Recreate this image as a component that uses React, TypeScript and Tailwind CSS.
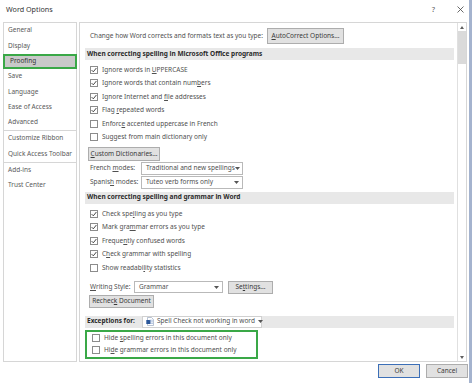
import React from "react";

const font = { fontFamily: '"Noto Sans", "Open Sans", sans-serif' };

// "&" marks the access key letter, which gets underlined
function Label({ text }: { text: string }) {
  const i = text.indexOf("&");
  if (i < 0) return <span>{text}</span>;
  return (
    <span>
      {text.slice(0, i)}
      <u>{text[i + 1]}</u>
      {text.slice(i + 2)}
    </span>
  );
}

function Check({ checked, label }: { checked?: boolean; label: string }) {
  return (
    <div className="flex items-center h-[13.5px] pl-[5px] gap-[4px] text-[#505050]">
      <span className="w-[8px] h-[8px] border border-[#8c8c8c] bg-white flex items-center justify-center shrink-0">
        {checked && (
          <svg width="6" height="6" viewBox="0 0 6 6">
            <path d="M0.6 3.1 L2.3 4.8 L5.4 1" fill="none" stroke="#333" strokeWidth="0.9" />
          </svg>
        )}
      </span>
      <Label text={label} />
    </div>
  );
}

function Caret() {
  return (
    <svg width="5" height="3" viewBox="0 0 5 3" className="shrink-0">
      <path d="M0 0 H5 L2.5 3 Z" fill="#555" />
    </svg>
  );
}

function Select({ value, className }: { value: string; className: string }) {
  return (
    <div
      className={`flex items-center justify-between border border-[#b9b9b9] bg-white pl-[4px] pr-[3px] text-[#505050] ${className}`}
    >
      <span>{value}</span>
      <Caret />
    </div>
  );
}

function Btn({ label, className }: { label: string; className: string }) {
  return (
    <div
      className={`flex items-center justify-center border border-[#adadad] bg-[#e1e1e1] text-[#3a3a3a] ${className}`}
    >
      <Label text={label} />
    </div>
  );
}

function Band({ children }: { children: React.ReactNode }) {
  return (
    <div className="h-[12px] bg-[#e8e8e8] flex items-center pl-[2px] font-bold text-[#2b2b2b]">
      {children}
    </div>
  );
}

const navGroups = [
  ["General", "Display", "Proofing", "Save", "Language", "Ease of Access", "Advanced"],
  ["Customize Ribbon", "Quick Access Toolbar"],
  ["Add-ins", "Trust Center"],
];

export default function App() {
  return (
    <div
      className="w-[474px] h-[383px] bg-white flex text-[6.5px] leading-none whitespace-nowrap overflow-hidden"
      style={font}
    >
      <div className="w-[469px] flex flex-col">
        {/* Title bar */}
        <div className="h-[22px] flex items-start justify-between pt-[6px] pl-[6px] pr-[5px]">
          <span className="text-[7.2px] text-[#333]">Word Options</span>
          <div className="flex items-center gap-[22px] text-[#555]">
            <span className="text-[7.5px]">?</span>
            <svg width="7" height="7" viewBox="0 0 7 7">
              <path d="M0.5 0.5 L6.5 6.5 M6.5 0.5 L0.5 6.5" stroke="#444" strokeWidth="0.8" />
            </svg>
          </div>
        </div>

        {/* Body */}
        <div className="h-[340px] flex pl-[3px] pr-[2px] gap-[2px]">
          {/* Left nav */}
          <div className="w-[74px] border border-[#d6d6d6] flex flex-col text-[#5a5a5a]">
            {navGroups.map((group, gi) => (
              <div key={gi} className={gi > 0 ? "border-t border-[#d6d6d6]" : ""}>
                {group.map((item) =>
                  item === "Proofing" ? (
                    <div
                      key={item}
                      className="h-[15.3px] -mx-[1px] flex items-center pl-[5px] bg-[#c9c9c9] border-2 border-[#3aa847] text-[#333]"
                    >
                      {item}
                    </div>
                  ) : (
                    <div key={item} className="h-[15.3px] flex items-center pl-[4px]">
                      {item}
                    </div>
                  )
                )}
              </div>
            ))}
          </div>

          {/* Right panel */}
          <div className="flex-1 border border-[#d6d6d6] flex">
            <div className="flex-1 flex flex-col pl-[5px] pr-[3px]">
              <div className="mt-[5px] h-[16px] flex items-center pl-[5px] gap-[4px] text-[#505050]">
                <span>Change how Word corrects and formats text as you type:</span>
                <Btn label="&AutoCorrect Options..." className="w-[77px] h-[16px]" />
              </div>

              <div className="mt-[4px]">
                <Band>When correcting spelling in Microsoft Office programs</Band>
              </div>
              <div className="mt-[3px]">
                <Check checked label="Ignore words in &UPPERCASE" />
                <Check checked label="Ignore words that contain num&bers" />
                <Check checked label="Ignore Internet and &file addresses" />
                <Check checked label="Flag &repeated words" />
                <Check label="Enforc&e accented uppercase in French" />
                <Check label="Suggest from main dictionary only" />
              </div>
              <div className="mt-[3px] pl-[3px]">
                <Btn label="&Custom Dictionaries..." className="w-[72px] h-[14px]" />
              </div>
              <div className="flex items-center h-[14px] pl-[5px] mt-[0.5px] text-[#505050]">
                <span className="w-[51px]">
                  <Label text="French &modes:" />
                </span>
                <Select value="Traditional and new spellings" className="w-[102px] h-[13px]" />
              </div>
              <div className="flex items-center h-[14px] pl-[5px] text-[#505050]">
                <span className="w-[51px]">
                  <Label text="Spanis&h modes:" />
                </span>
                <Select value="Tuteo verb forms only" className="w-[102px] h-[13px]" />
              </div>

              <div className="mt-[2px]">
                <Band>When correcting spelling and grammar in Word</Band>
              </div>
              <div className="mt-[3.5px]">
                <Check checked label="Check spe&lling as you type" />
                <Check checked label="Mark gra&mmar errors as you type" />
                <Check checked label="Freque&ntly confused words" />
                <Check checked label="C&heck grammar with spelling" />
                <Check label="Show readabi&lity statistics" />
              </div>
              <div className="mt-[6px] flex items-center h-[13px] pl-[5px] text-[#505050]">
                <span className="w-[44px]">
                  <Label text="&Writing Style:" />
                </span>
                <Select value="Grammar" className="w-[89px] h-[12px]" />
                <Btn label="Se&ttings..." className="ml-[5px] w-[45px] h-[13px]" />
              </div>
              <div className="mt-[1px] pl-[4px]">
                <Btn label="Rechec&k Document" className="w-[65px] h-[13px]" />
              </div>

              <div className="mt-[8px] h-[12px] bg-[#e8e8e8] flex items-center pl-[2px]">
                <span className="w-[55px] font-bold text-[#2b2b2b]">Exceptions for:</span>
                <div className="w-[120px] h-[12px] bg-white border border-[#d0d0d0] flex items-center pl-[3px] pr-[3px] gap-[3px] text-[#505050]">
                  <svg width="8" height="9" viewBox="0 0 8 9" className="shrink-0">
                    <path d="M1.5 0.5 H5.5 L7.5 2.5 V8.5 H1.5 Z" fill="#fff" stroke="#8a9bb5" strokeWidth="0.6" />
                    <rect x="0.3" y="3" width="4.2" height="4" fill="#2b579a" />
                    <path d="M3.5 3.2 H7 M4.6 4.8 H7 M4.6 6.4 H7" stroke="#7f9ccc" strokeWidth="0.6" />
                  </svg>
                  <span className="flex-1">Spell Check not working in word</span>
                  <Caret />
                </div>
              </div>
              <div className="mt-[2px] w-[173px] h-[29px] border-2 border-[#3aa847] flex flex-col justify-center">
                <Check label="Hide &spelling errors in this document only" />
                <Check label="Hi&de grammar errors in this document only" />
              </div>
            </div>

            {/* Scrollbar */}
            <div className="w-[9px] border-l border-[#e0e0e0] flex flex-col">
              <div className="h-[8px] flex items-center justify-center">
                <svg width="4" height="3" viewBox="0 0 4 3">
                  <path d="M0 3 H4 L2 0 Z" fill="#606060" />
                </svg>
              </div>
              <div className="h-[33px] bg-[#dadada]" />
              <div className="flex-1" />
              <div className="h-[8px] flex items-center justify-center">
                <svg width="4" height="3" viewBox="0 0 4 3">
                  <path d="M0 0 H4 L2 3 Z" fill="#606060" />
                </svg>
              </div>
            </div>
          </div>
        </div>

        {/* Footer */}
        <div className="flex justify-end gap-[6px] pt-[2px] pr-[1px]">
          <div className="w-[42px] h-[14px] border border-[#3c6fb7] bg-[#e1e1e1] flex items-center justify-center text-[#3a3a3a]">
            OK
          </div>
          <div className="w-[42px] h-[14px] border border-[#adadad] bg-[#e1e1e1] flex items-center justify-center text-[#3a3a3a]">
            Cancel
          </div>
        </div>
      </div>
      <div className="w-[3px] bg-[#a4b3ce]" />
    </div>
  );
}
